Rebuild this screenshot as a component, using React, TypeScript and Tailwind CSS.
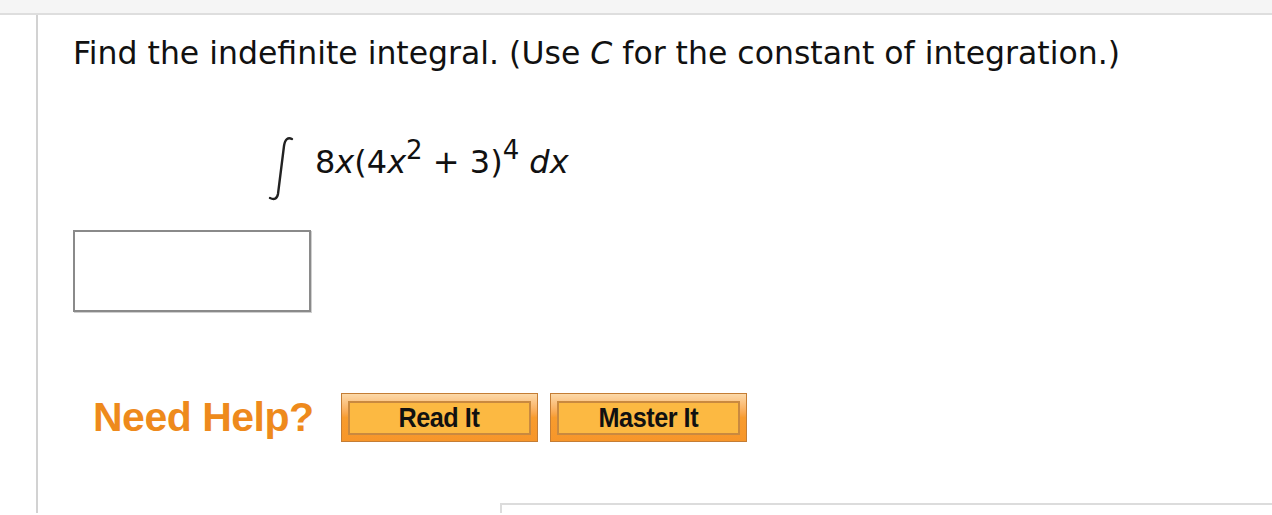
export default function App() {
  return (
    <div className="w-[1272px] h-[515px] overflow-hidden bg-white" style={{ fontFamily: '"DejaVu Sans", Verdana, sans-serif' }}>
      <div className="h-[15px] bg-[#f5f5f5] border-b-2 border-[#dedede]" />
      <div className="flex h-[498px]">
        <div className="w-[36px] shrink-0" />
        <div className="flex-1 border-l-2 border-[#d2d2d2] pl-[35px] pt-[19px] flex flex-col">
          <p className="text-[31.5px] leading-[38px] text-[#111] whitespace-nowrap">
            Find the indefinite integral. (Use <i>C</i> for the constant of integration.)
          </p>

          <div className="flex items-center h-[66px] mt-[64px] ml-[194px]">
            <svg width="28" height="66" viewBox="0 0 28 66" className="shrink-0">
              <path d="M25 3 C21 1 18 3 17 10 L11 58 C10 63 7 64 3 62" fill="none" stroke="#222" strokeWidth="2.4" strokeLinecap="round" />
            </svg>
            <div className="ml-[20px] text-[32px] leading-none text-[#111] mt-[-14px] whitespace-nowrap">
              8<i>x</i>(4<i>x</i>
              <sup className="text-[26px] relative top-[-14px]">2</sup> + 3)
              <sup className="text-[26px] relative top-[-14px]">4</sup> <i>dx</i>
            </div>
          </div>

          <div className="mt-[28px] w-[238px] h-[82px] border-2 border-[#8a8a8a] shadow-[1px_1px_0_#cfcfcf]" />

          <div className="flex items-center mt-[81px] ml-[20px]" style={{ fontFamily: '"Liberation Sans", Arial, sans-serif' }}>
            <span className="text-[41px] font-bold text-[#ee8a1c] leading-none tracking-[-0.5px]">Need Help?</span>
            <div className="flex gap-[12px] ml-[27px]">
              <HelpButton label="Read It" />
              <HelpButton label="Master It" />
            </div>
          </div>

          <div className="flex-1" />
          <div className="ml-[427px] h-[10px] border-t-2 border-l-2 border-[#dcdcdc]" />
        </div>
      </div>
    </div>
  );
}

function HelpButton({ label }: { label: string }) {
  return (
    <div className="w-[197px] h-[49px] border border-[#c47d35] bg-gradient-to-b from-[#fcd9a8] via-[#f89c2e] to-[#f7962a] p-[6px] pt-[7px]">
      <div className="h-full border-2 border-[#c9893f] bg-[#fcb942] flex items-center justify-center">
        <span className="text-[28px] font-bold text-[#111] tracking-[-0.5px] [transform:scaleX(0.9)] leading-none">{label}</span>
      </div>
    </div>
  );
}
